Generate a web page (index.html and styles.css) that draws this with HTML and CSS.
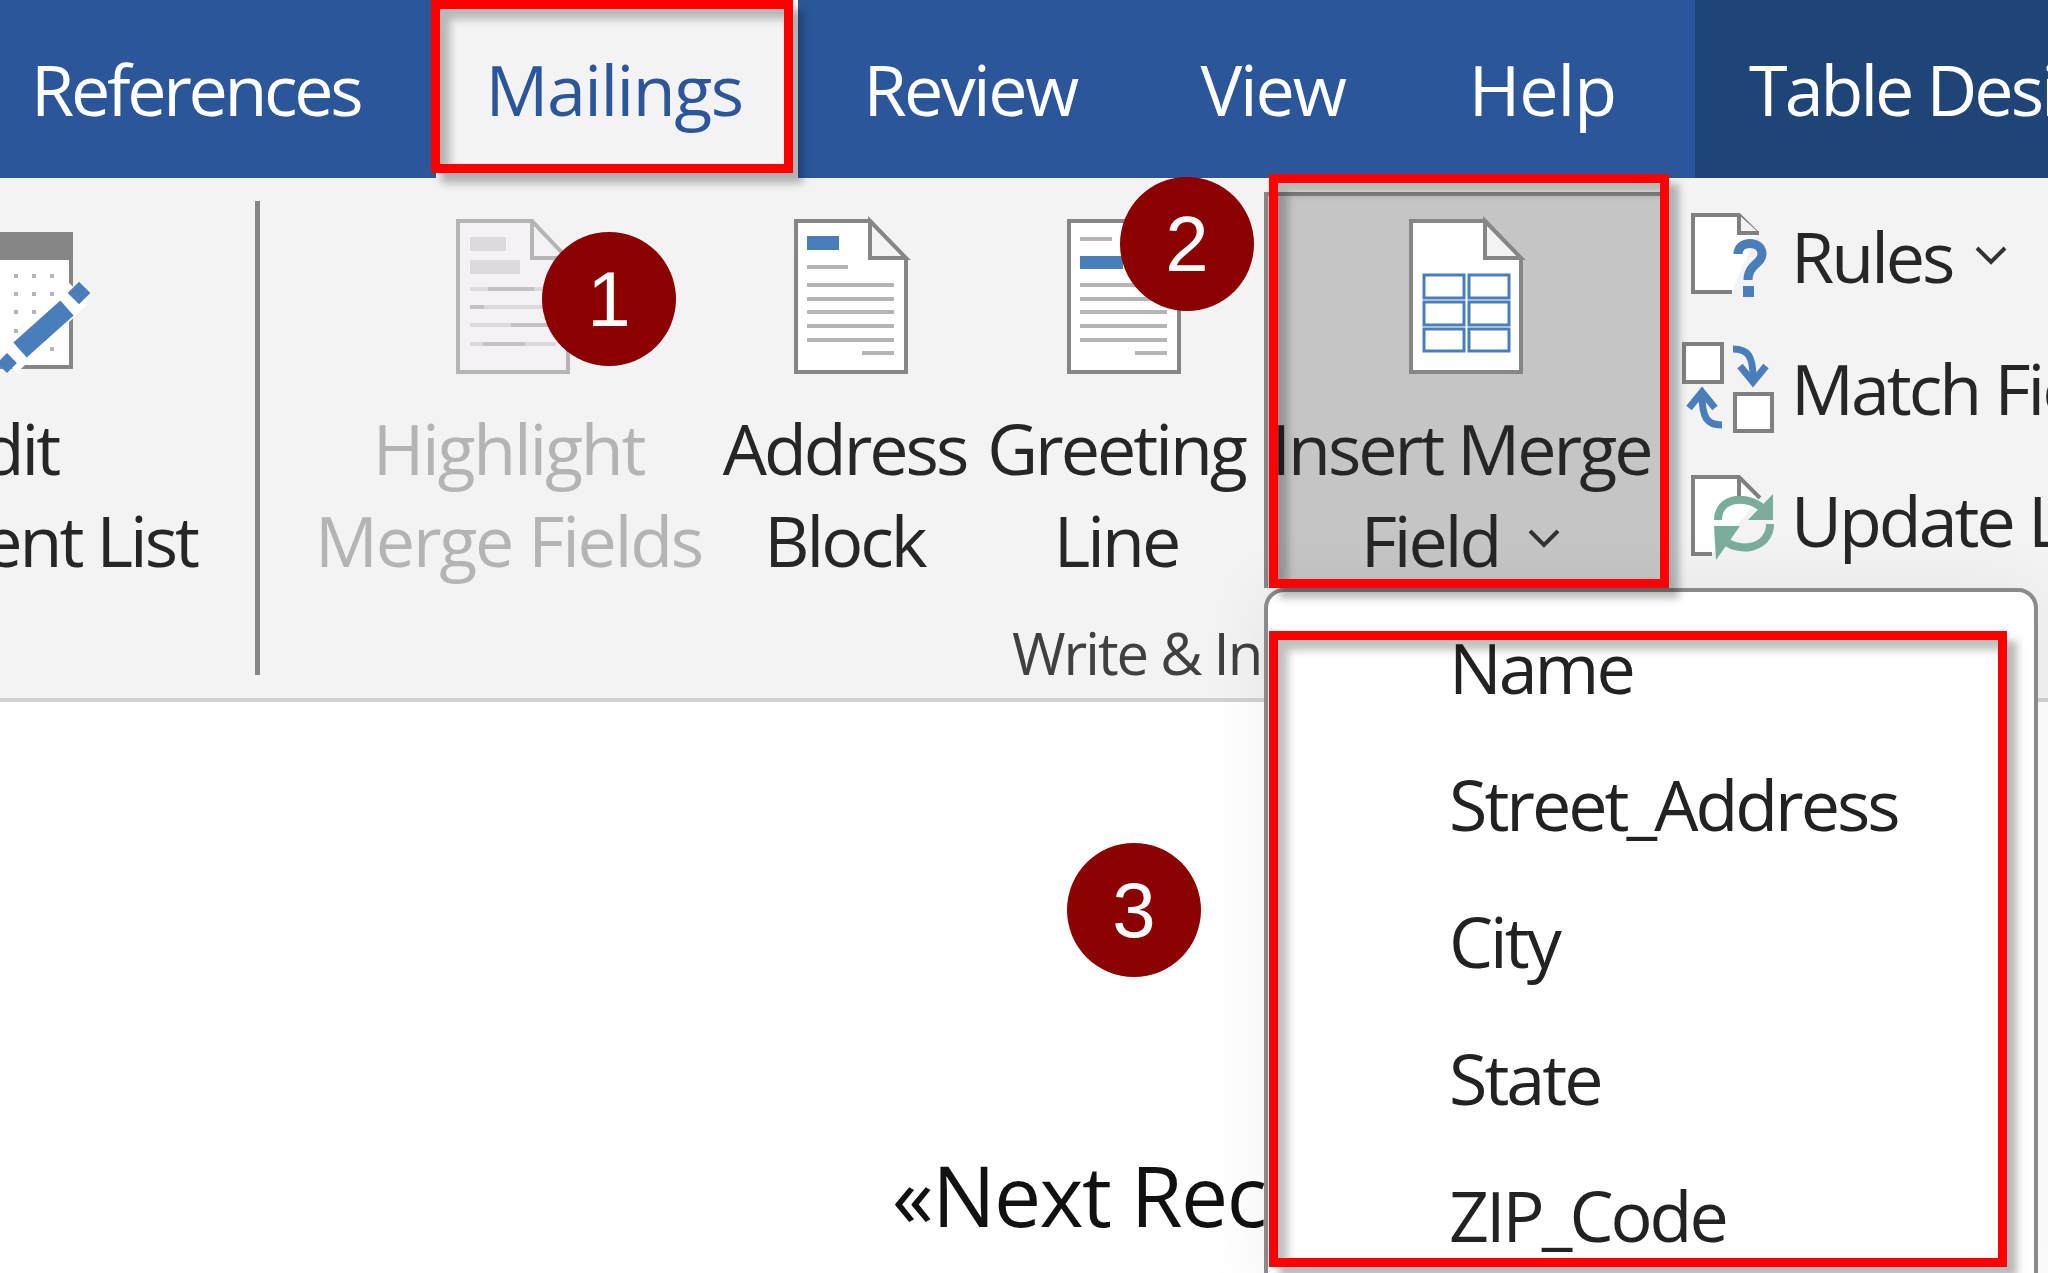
FILE: index.html
```html
<!DOCTYPE html>
<html>
<head>
    <title>Mailings</title>
    <link rel="stylesheet" href="styles.css">
</head>
<body>
    <div class="page">
        <div class="tabs">
            <div class="tab first">References</div>
            <div class="tab active">Mailings</div>
            <div class="tab review">Review</div>
            <div class="tab view">View</div>
            <div class="tab help">Help</div>
            <div class="tab contextual">Table Design</div>
        </div>

        <div class="ribbon">
            <div class="big-button edit-button">
                <svg class="icon" width="170" height="155" viewBox="7 0 170 155">
                    <rect x="49" y="15" width="112" height="133" fill="#fff" stroke="#868686" stroke-width="4"/>
                    <rect x="47" y="13" width="116" height="28" fill="#868686"/>
                    <g fill="#b5b5b5">
                        <rect x="104" y="55" width="4" height="4"/><rect x="122" y="55" width="4" height="4"/><rect x="140" y="55" width="4" height="4"/>
                        <rect x="104" y="73" width="4" height="4"/><rect x="122" y="73" width="4" height="4"/><rect x="140" y="73" width="4" height="4"/>
                        <rect x="104" y="91" width="4" height="4"/><rect x="122" y="91" width="4" height="4"/>
                        <rect x="104" y="110" width="4" height="4"/>
                        <rect x="140" y="128" width="4" height="4"/>
                    </g>
                    <path d="M169 74 L97 144" stroke="#fff" stroke-width="28"/>
                    <path d="M157 89 L110 131" stroke="#4a7eba" stroke-width="20"/>
                    <rect x="161" y="66" width="16" height="16" fill="#4a7eba" transform="rotate(45 169 74)"/>
                    <rect x="90" y="137" width="14" height="14" fill="#4a7eba" transform="rotate(45 97 144)"/>
                </svg>
                <div class="label">Edit<br>Recipient List</div>
            </div>

            <div class="separator"></div>

            <div class="group">
                <div class="group-row">
                    <div class="big-button highlight-button disabled">
                        <svg class="icon" width="114" height="155" viewBox="0 0 114 155">
                            <path d="M2 2 H76 L112 40 V153 H2 Z" fill="#f5f2f6" stroke="#b5b5b5" stroke-width="4"/>
                            <path d="M76 2 V39 H112" fill="none" stroke="#b5b5b5" stroke-width="4"/>
                            <rect x="14" y="18" width="36" height="14" fill="#dddadd"/>
                            <rect x="14" y="41" width="50" height="14" fill="#dddadd"/>
                            <rect x="14" y="68" width="86" height="4" fill="#dddadd"/>
                            <rect x="32" y="68" width="46" height="4" fill="#c4c1c4"/>
                            <rect x="14" y="86" width="86" height="4" fill="#dddadd"/>
                            <rect x="14" y="86" width="14" height="4" fill="#c4c1c4"/>
                            <rect x="14" y="104" width="86" height="4" fill="#dddadd"/>
                            <rect x="55" y="104" width="40" height="4" fill="#c4c1c4"/>
                            <rect x="14" y="123" width="86" height="4" fill="#dddadd"/>
                            <rect x="27" y="123" width="42" height="4" fill="#c4c1c4"/>
                        </svg>
                        <div class="label">Highlight<br>Merge Fields</div>
                    </div>

                    <div class="big-button address-button">
                        <svg class="icon" width="114" height="155" viewBox="0 0 114 155">
                            <path d="M2 2 H76 L112 40 V153 H2 Z" fill="#fff" stroke="#868686" stroke-width="4"/>
                            <path d="M76 2 V39 H112 Z" fill="#f3f3f3" stroke="#868686" stroke-width="4"/>
                            <rect x="13" y="17" width="32" height="14" fill="#4a7eba"/>
                            <g fill="#b5b5b5">
                                <rect x="13" y="46" width="41" height="4"/>
                                <rect x="13" y="64" width="87" height="4"/>
                                <rect x="13" y="78" width="87" height="4"/>
                                <rect x="13" y="91" width="87" height="4"/>
                                <rect x="13" y="105" width="87" height="4"/>
                                <rect x="13" y="119" width="87" height="4"/>
                                <rect x="68" y="132" width="32" height="4"/>
                            </g>
                        </svg>
                        <div class="label">Address<br>Block</div>
                    </div>

                    <div class="big-button greeting-button">
                        <svg class="icon" width="114" height="155" viewBox="0 0 114 155">
                            <path d="M2 2 H76 L112 40 V153 H2 Z" fill="#fff" stroke="#868686" stroke-width="4"/>
                            <path d="M76 2 V39 H112 Z" fill="#f3f3f3" stroke="#868686" stroke-width="4"/>
                            <rect x="13" y="37" width="43" height="13" fill="#4a7eba"/>
                            <g fill="#b5b5b5">
                                <rect x="13" y="18" width="32" height="4"/>
                                <rect x="13" y="64" width="87" height="4"/>
                                <rect x="13" y="78" width="87" height="4"/>
                                <rect x="13" y="91" width="87" height="4"/>
                                <rect x="13" y="105" width="87" height="4"/>
                                <rect x="13" y="119" width="87" height="4"/>
                                <rect x="68" y="132" width="32" height="4"/>
                            </g>
                        </svg>
                        <div class="label">Greeting<br>Line</div>
                    </div>

                    <div class="big-button insert-button">
                        <svg class="icon" width="114" height="155" viewBox="0 0 114 155">
                            <path d="M2 2 H76 L112 40 V153 H2 Z" fill="#fff" stroke="#868686" stroke-width="4"/>
                            <path d="M76 2 V39 H112 Z" fill="#f3f3f3" stroke="#868686" stroke-width="4"/>
                            <g fill="none" stroke="#4a7eba" stroke-width="3">
                                <rect x="15" y="56" width="40" height="23"/><rect x="60" y="56" width="40" height="23"/>
                                <rect x="15" y="83" width="40" height="23"/><rect x="60" y="83" width="40" height="23"/>
                                <rect x="15" y="110" width="40" height="22"/><rect x="60" y="110" width="40" height="22"/>
                            </g>
                        </svg>
                        <div class="label">Insert Merge<br>Field<svg class="chevron field-chevron" width="34" height="20" viewBox="0 0 34 20"><path d="M3 3 L17 17 L31 3" fill="none" stroke="#333" stroke-width="4"/></svg></div>
                    </div>

                    <div class="small-buttons">
                        <div class="small-button">
                            <svg width="98" height="92" viewBox="0 0 98 92">
                                <path d="M50 82 H11 V5 H57 L75 23" fill="#fff" stroke="#808080" stroke-width="4"/>
                                <path d="M57 5 V23 H77" fill="#f3f3f3" stroke="#808080" stroke-width="4"/>
                                <path d="M56 44 C56 30 80 30 80 44 C80 54 66 54 66 70" fill="none" stroke="#4a7eba" stroke-width="9"/>
                                <rect x="61" y="76" width="11" height="11" fill="#4a7eba"/>
                            </svg>
                            <span>Rules</span>
                            <svg class="chevron rules-chevron" width="34" height="20" viewBox="0 0 34 20"><path d="M3 3 L17 17 L31 3" fill="none" stroke="#333" stroke-width="4"/></svg>
                        </div>
                        <div class="small-button">
                            <svg width="98" height="92" viewBox="0 0 98 92">
                                <rect x="2" y="2" width="38" height="38" fill="#fff" stroke="#808080" stroke-width="4"/>
                                <rect x="53" y="52" width="37" height="37" fill="#fff" stroke="#808080" stroke-width="4"/>
                                <g fill="none" stroke="#4a7eba" stroke-width="7">
                                    <path d="M51 7 C66 7 71 14 71 36"/>
                                    <path d="M58 24 L71 40 L84 24"/>
                                    <path d="M40 83 C25 83 20 76 20 52"/>
                                    <path d="M7 66 L20 50 L33 66"/>
                                </g>
                            </svg>
                            <span>Match Fields</span>
                        </div>
                        <div class="small-button">
                            <svg width="98" height="92" viewBox="0 0 98 92">
                                <path d="M30 80 H11 V3 H57 L78 24" fill="#fff" stroke="#808080" stroke-width="4"/>
                                <path d="M57 3 V24" fill="none" stroke="#808080" stroke-width="4"/>
                                <g fill="none" stroke="#7aae9b" stroke-width="8">
                                    <path d="M36 46 C36 22 68 20 82 36"/>
                                    <path d="M88 50 C88 76 54 80 40 64"/>
                                </g>
                                <path d="M91 20 V46 H66 Z M32 52 H58 L34 86 Z" fill="#7aae9b"/>
                            </svg>
                            <span>Update Labels</span>
                        </div>
                    </div>
                </div>
                <div class="group-name">Write &amp; Insert Fields</div>
            </div>
        </div>

        <div class="document">«Next Record»</div>

        <div class="menu">
            <div class="menu-item">Name</div>
            <div class="menu-item">Street_Address</div>
            <div class="menu-item">City</div>
            <div class="menu-item">State</div>
            <div class="menu-item">ZIP_Code</div>
        </div>

        <div class="callout callout-tab"></div>
        <div class="callout callout-button"></div>
        <div class="callout callout-menu"></div>

        <div class="badge badge-one">1</div>
        <div class="badge badge-two">2</div>
        <div class="badge badge-three">3</div>
    </div>
</body>
</html>
```

FILE: styles.css
```css
body {
    margin: 0;
    background-color: #fff;
    font-family: "Open Sans", "Noto Sans", sans-serif;
    font-size: 70px;
    letter-spacing: -3px;
    color: #262626;
}

/* the source is an enlarged screenshot, so everything is a bit soft */
.page {
    position: relative;
    width: 2048px;
    height: 1273px;
    overflow: hidden;
    filter: blur(0.7px);
}

/* tab strip */
.tabs {
    display: flex;
    height: 178px;
    background-color: #2b579a;
    color: #fff;
}

.tab {
    flex: none;
    padding: 0 62px;
    line-height: 178px;
    white-space: nowrap;
}

.tab.first {
    padding: 0 76px 0 31px;
    letter-spacing: -3.3px;
}

.tab.active {
    width: 362px;
    box-sizing: border-box;
    padding: 0 0 0 49px;
    background-color: #f3f3f3;
    color: #2b579a;
    letter-spacing: -1.5px;
}

.tab.review {
    padding-left: 65px;
    letter-spacing: -2.6px;
}

.tab.view {
    letter-spacing: -2.2px;
}

.tab.help {
    padding-right: 79px;
    letter-spacing: -1px;
}

.tab.contextual {
    flex: 1;
    padding: 0 0 0 54px;
    background-color: #1f4478;
}

/* ribbon */
.ribbon {
    display: flex;
    height: 524px;
    box-sizing: border-box;
    background-color: #f3f3f3;
    border-bottom: 4px solid #d2d2d2;
    overflow: hidden;
}

.big-button {
    flex: none;
    text-align: center;
    padding-top: 41px;
}

.big-button .icon {
    display: block;
    margin: 0 auto 28px;
    overflow: visible;
}

.label {
    line-height: 92px;
    white-space: nowrap;
}

.edit-button {
    width: 490px;
    margin-left: -243px;
    margin-right: 8px;
}

.separator {
    flex: none;
    width: 5px;
    height: 474px;
    margin-top: 23px;
    background-color: #868686;
}

.group {
    display: flex;
    flex-direction: column;
    margin-left: 40px;
}

.group-row {
    display: flex;
    height: 410px;
}

.group-name {
    margin: 34px 0 0 712px;
    font-size: 58px;
    letter-spacing: -2px;
    line-height: 62px;
    color: #404040;
    white-space: nowrap;
}

.highlight-button {
    width: 417px;
}

.highlight-button .icon {
    margin-left: 156px;
}

.highlight-button.disabled {
    color: #b4b4b4;
    letter-spacing: -2.2px;
}

.address-button {
    width: 263px;
}

.address-button .icon {
    margin-left: 77px;
}

.address-button .label {
    margin-left: -8px;
}

.greeting-button {
    width: 278px;
}

.greeting-button .icon {
    margin-left: 87px;
}

.greeting-button .label {
    margin-left: -6px;
}

.insert-button {
    width: 404px;
    height: 396px;
    box-sizing: border-box;
    margin: 14px 0 0 6px;
    padding-top: 23px;
    background-color: #c5c5c5;
    border-top: 4px solid #868686;
    border-left: 4px solid #868686;
}

.insert-button .icon {
    margin-left: 141px;
}

.insert-button .label {
    margin-left: -14px;
}

.chevron {
    vertical-align: middle;
}

.field-chevron {
    margin-left: 28px;
    margin-bottom: 20px;
}

.small-buttons {
    flex: none;
    margin: 12px 0 0 14px;
}

.small-button {
    display: flex;
    align-items: center;
    height: 132px;
    gap: 11px;
    white-space: nowrap;
}

.rules-chevron {
    margin-left: 11px;
    margin-bottom: 2px;
}

/* document */
.document {
    padding: 437px 0 0 892px;
    font-size: 84px;
    letter-spacing: -1.5px;
    line-height: 112px;
    color: #111;
    white-space: nowrap;
}

/* dropdown */
.menu {
    position: absolute;
    left: 1264px;
    top: 588px;
    width: 774px;
    height: 700px;
    box-sizing: border-box;
    padding: 7px 0 0 181px;
    background-color: #fff;
    border: 4px solid #8a8a8a;
    border-radius: 20px 20px 0 0;
    box-shadow: 0 0 70px rgba(0, 0, 0, 0.06);
    color: #222;
}

.menu-item {
    line-height: 137px;
}

/* annotations */
.callout {
    position: absolute;
    box-sizing: border-box;
    border: 9px solid #f00;
    box-shadow: 10px 10px 8px rgba(0, 0, 0, 0.28), inset 10px 10px 8px rgba(0, 0, 0, 0.25);
}

.callout-tab {
    left: 431px;
    top: 0;
    width: 362px;
    height: 173px;
}

.callout-button {
    left: 1269px;
    top: 174px;
    width: 400px;
    height: 414px;
}

.callout-menu {
    left: 1269px;
    top: 631px;
    width: 738px;
    height: 636px;
}

.badge {
    position: absolute;
    width: 134px;
    height: 134px;
    border-radius: 50%;
    background-color: #8b0000;
    color: #fff;
    font-family: "Liberation Sans", sans-serif;
    font-size: 78px;
    letter-spacing: 0;
    line-height: 134px;
    text-align: center;
}

.badge-one {
    left: 542px;
    top: 232px;
}

.badge-two {
    left: 1120px;
    top: 177px;
}

.badge-three {
    left: 1067px;
    top: 843px;
}
```
